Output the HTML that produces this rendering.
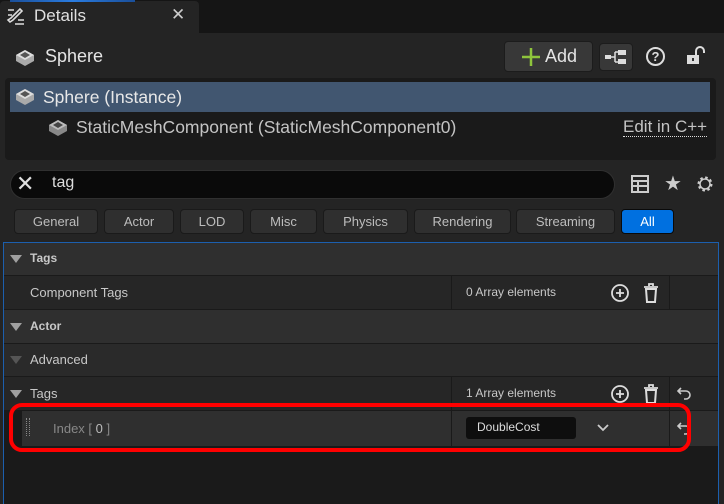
<!DOCTYPE html>
<html><head><style>
*{margin:0;padding:0;box-sizing:border-box}
body{width:724px;height:503px;background:#242424;font-family:"Liberation Sans",sans-serif;color:#c0c0c0;position:relative;overflow:hidden}
.a{position:absolute}
.btn{position:absolute;top:209px;height:25px;background:#2f2f2f;border:1px solid #1a1a1a;border-radius:4px;font-size:13px;color:#bdbdbd;text-align:center;line-height:23px}
.row{position:absolute;left:4px;width:714px;font-size:13px;color:#c8c8c8}
.tri{position:absolute;left:6px;width:0;height:0;border-left:6px solid transparent;border-right:6px solid transparent;border-top:8px solid #a0a0a0}
</style></head><body>
<div class="a" style="left:0;top:0;width:724px;height:33px;background:#151515"></div>
<div class="a" style="left:0;top:1px;width:199px;height:32px;background:#242424;border-radius:4px 4px 0 0"></div>
<div class="a" style="left:10px;top:0;width:125px;height:2px;background:linear-gradient(90deg,#1a4f9a,#2a7ce0,#1a4f9a)"></div>
<svg class="a" style="left:6px;top:6px" width="20" height="20" viewBox="0 0 20 20"><path d="M2 4h6M2 9h4M2 14l3-2 9-9 2 2-9 9-3 2z M9 18h9M12 14h6" stroke="#ddd" stroke-width="1.6" fill="none"/></svg>
<div class="a" style="left:34px;top:6px;font-size:17px;color:#e0e0e0">Details</div>
<div class="a" style="left:171px;top:5px;font-size:17px;color:#ccc">✕</div>
<svg class="a" style="left:14px;top:47px" width="22" height="20" viewBox="0 0 22 20"><path d="M2 8l9-5 9 5v6l-9 5-9-5z" fill="#aaa"/><path d="M2 8l9 5 9-5-9-5z" fill="#ddd"/><path d="M6 8l5-3 5 3-5 3z" fill="#555"/></svg>
<div class="a" style="left:45px;top:46px;font-size:18px;color:#e4e4e4">Sphere</div>
<div class="a" style="left:504px;top:41px;width:89px;height:31px;background:#383838;border:1px solid #1c1c1c;border-radius:4px"></div>
<svg class="a" style="left:521px;top:47px" width="20" height="20"><path d="M10 1v18M1 10h18" stroke="#8ec43c" stroke-width="2.5"/></svg>
<div class="a" style="left:545px;top:46px;font-size:18px;color:#e4e4e4">Add</div>
<div class="a" style="left:599px;top:43px;width:34px;height:28px;background:#383838;border:1px solid #1c1c1c;border-radius:4px"></div>
<svg class="a" style="left:604px;top:49px" width="24" height="16"><rect x="1" y="6" width="6" height="4" fill="#ddd"/><rect x="14" y="1" width="8" height="5" fill="#ddd"/><rect x="14" y="10" width="8" height="5" fill="#ddd"/><path d="M7 8h4M11 3v10M11 3h3M11 13h3" stroke="#ddd" stroke-width="1.5" fill="none"/></svg>
<svg class="a" style="left:645px;top:46px" width="21" height="21"><circle cx="10.5" cy="10.5" r="8.5" stroke="#ddd" stroke-width="2" fill="none"/><text x="10.5" y="15" font-size="13" font-weight="bold" fill="#ddd" text-anchor="middle" font-family="Liberation Sans">?</text></svg>
<svg class="a" style="left:686px;top:46px" width="20" height="20"><rect x="1" y="9" width="12" height="9" fill="#ddd"/><path d="M10 9V5a4 4 0 0 1 8 0v2" stroke="#ddd" stroke-width="2" fill="none"/><rect x="6" y="12" width="2" height="3" fill="#333"/></svg>
<div class="a" style="left:5px;top:78px;width:711px;height:82px;background:#1a1a1a;border-radius:4px"></div>
<div class="a" style="left:10px;top:82px;width:700px;height:30px;background:#415670"></div>
<svg class="a" style="left:14px;top:86px" width="22" height="20" viewBox="0 0 22 20"><path d="M2 8l9-5 9 5v6l-9 5-9-5z" fill="#aaa"/><path d="M2 8l9 5 9-5-9-5z" fill="#ddd"/><path d="M6 8l5-3 5 3-5 3z" fill="#555"/></svg>
<div class="a" style="left:43px;top:87px;font-size:17.5px;color:#e8e8e8">Sphere (Instance)</div>
<svg class="a" style="left:47px;top:117px" width="22" height="20" viewBox="0 0 22 20"><path d="M2 8l9-5 9 5v6l-9 5-9-5z" fill="#888"/><path d="M2 8l9 5 9-5-9-5z" fill="#bbb"/><path d="M6 8l5-3 5 3-5 3z" fill="#444"/></svg>
<div class="a" style="left:76px;top:117px;font-size:17.5px;color:#c4c4c4">StaticMeshComponent (StaticMeshComponent0)</div>
<div class="a" style="left:623px;top:117px;font-size:17px;color:#c4c4c4;border-bottom:1px dotted #ddd;line-height:19px">Edit in C++</div>
<div class="a" style="left:10px;top:170px;width:605px;height:29px;background:#0a0a0a;border:1px solid #303030;border-radius:15px"></div>
<div class="a" style="left:16px;top:171px;font-size:22px;color:#e0e0e0">✕</div>
<div class="a" style="left:52px;top:174px;font-size:16px;color:#ddd">tag</div>
<svg class="a" style="left:631px;top:175px" width="18" height="18"><rect x="1" y="1" width="16" height="16" fill="none" stroke="#ccc" stroke-width="2"/><path d="M1 6h16M1 11h16M7 6v11" stroke="#ccc" stroke-width="2"/></svg>
<div class="a" style="left:664px;top:171px;font-size:20px;color:#ccc">★</div>
<svg class="a" style="left:695px;top:174px" width="20" height="20"><circle cx="10" cy="10" r="6" stroke="#ccc" stroke-width="3" fill="none" stroke-dasharray="2.4 2.3"/><circle cx="10" cy="10" r="5" stroke="#ccc" stroke-width="1.5" fill="none"/></svg>
<div class="btn" style="left:14px;width:84px">General</div>
<div class="btn" style="left:104px;width:70px">Actor</div>
<div class="btn" style="left:180px;width:64px">LOD</div>
<div class="btn" style="left:250px;width:67px">Misc</div>
<div class="btn" style="left:323px;width:85px">Physics</div>
<div class="btn" style="left:414px;width:97px">Rendering</div>
<div class="btn" style="left:516px;width:99px">Streaming</div>
<div class="btn" style="left:621px;width:53px;background:#0070e0;color:#fff;border-color:#0a0a0a">All</div>
<div class="a" style="left:3px;top:242px;width:716px;height:262px;background:#1a1a1a;border:1px solid #1c5fae;border-bottom:none"></div>
<div class="row" style="top:243px;height:32px;background:#2f2f2f"><div class="tri" style="top:12px"></div><b class="a" style="left:26px;top:8px;font-size:12px">Tags</b></div>
<div class="row" style="top:276px;height:33px;background:#262626"><span class="a" style="left:26px;top:9px">Component Tags</span><span class="a" style="left:462px;top:9px;font-size:12px">0 Array elements</span></div>
<div class="row" style="top:310px;height:33px;background:#2f2f2f"><div class="tri" style="top:13px"></div><b class="a" style="left:26px;top:9px;font-size:12px">Actor</b></div>
<div class="row" style="top:344px;height:32px;background:#2a2a2a"><div class="tri" style="top:12px;border-top-color:#555"></div><span class="a" style="left:26px;top:8px">Advanced</span></div>
<div class="row" style="top:377px;height:33px;background:#262626"><div class="tri" style="top:13px"></div><span class="a" style="left:26px;top:9px">Tags</span><span class="a" style="left:462px;top:9px;font-size:12px">1 Array elements</span></div>
<div class="row" style="top:411px;height:35px;background:#2f2f2f;left:22px;width:696px"><span class="a" style="left:31px;top:10px;color:#888">Index [ <span style="color:#bbb">0</span> ]</span></div>
<div class="a" style="left:26px;top:418px;width:4px;height:18px;border-left:1px dotted #888;border-right:1px dotted #888"></div>
<div class="a" style="left:451px;top:276px;width:1px;height:33px;background:#1a1a1a"></div>
<div class="a" style="left:669px;top:276px;width:1px;height:33px;background:#1a1a1a"></div>
<div class="a" style="left:451px;top:377px;width:1px;height:69px;background:#1a1a1a"></div>
<div class="a" style="left:669px;top:377px;width:1px;height:69px;background:#1a1a1a"></div>
<div class="a" style="left:466px;top:417px;width:110px;height:22px;background:#0e0e0e;border-radius:3px;font-size:12px;color:#ddd;padding:3px 0 0 11px">DoubleCost</div>
<svg class="a" style="left:596px;top:423px" width="14" height="10"><path d="M2 2l5 5 5-5" stroke="#ccc" stroke-width="1.8" fill="none"/></svg>
<svg class="a" style="left:610px;top:282px" width="52" height="22"><circle cx="10" cy="11" r="8" stroke="#ddd" stroke-width="1.8" fill="none"/><path d="M10 7v8M6 11h8" stroke="#ddd" stroke-width="1.8"/><path d="M39 4v-2h4v2M34 5h14" stroke="#ddd" stroke-width="1.8" fill="none"/><path d="M36 7h10l-1 13h-8z" fill="none" stroke="#ddd" stroke-width="2"/></svg>
<svg class="a" style="left:610px;top:383px" width="52" height="22"><circle cx="10" cy="11" r="8" stroke="#ddd" stroke-width="1.8" fill="none"/><path d="M10 7v8M6 11h8" stroke="#ddd" stroke-width="1.8"/><path d="M39 4v-2h4v2M34 5h14" stroke="#ddd" stroke-width="1.8" fill="none"/><path d="M36 7h10l-1 13h-8z" fill="none" stroke="#ddd" stroke-width="2"/></svg>
<svg class="a" style="left:676px;top:386px" width="16" height="14"><path d="M5 2L2 5l3 3M2 5h8a4 4 0 0 1 0 8H8" stroke="#ccc" stroke-width="1.6" fill="none"/></svg>
<svg class="a" style="left:676px;top:421px" width="16" height="14"><path d="M5 2L2 5l3 3M2 5h8a4 4 0 0 1 0 8H8" stroke="#ccc" stroke-width="1.6" fill="none"/></svg>
<div class="a" style="left:9px;top:403px;width:682px;height:49px;border:4px solid #f00;border-radius:13px"></div>
</body></html>
